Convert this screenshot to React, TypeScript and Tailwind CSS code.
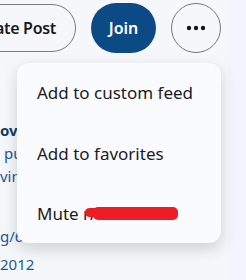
import React from "react";

export default function App() {
  return (
    <div
      className="relative w-[246px] h-[280px] overflow-hidden bg-[#f6f7fb]"
      style={{ fontFamily: '"Noto Sans", "Open Sans", sans-serif' }}
    >
      {/* right strip */}
      <div className="absolute top-0 right-0 w-[18px] h-full bg-[#f3f5fc]" />

      {/* background text */}
      <div className="absolute left-0 top-[119px] flex flex-col text-[15px] leading-[23px] text-[#1b5a97]">
        <span className="font-bold text-[#0f3d6b]">ove</span>
        <span className="pl-[4px]">pu</span>
        <span>vin</span>
        <span className="h-[37px]" />
        <span>g/6</span>
        <span className="mt-[5px]">2012</span>
      </div>

      {/* top buttons row */}
      <div className="absolute top-[3px] right-[25px] flex items-center gap-[15px] whitespace-nowrap">
        <div className="h-[48px] px-[19px] rounded-full border border-[#7c7c7c] flex items-center justify-center text-[16px] font-semibold tracking-[-0.3px] text-[#1a1a1b]">
          Create Post
        </div>
        <div className="h-[50px] w-[65px] rounded-full bg-[#0b4a85] flex items-center justify-center text-[16px] font-semibold text-white">
          Join
        </div>
        <div className="h-[50px] w-[50px] rounded-full border border-[#777] flex items-center justify-center">
          <svg width="20" height="6" viewBox="0 0 20 6">
            <circle cx="3" cy="3" r="2.2" fill="#0f1a1c" />
            <circle cx="10" cy="3" r="2.2" fill="#0f1a1c" />
            <circle cx="17" cy="3" r="2.2" fill="#0f1a1c" />
          </svg>
        </div>
      </div>

      {/* dropdown menu */}
      <div className="absolute left-[17px] top-[63px] w-[204px] h-[180px] rounded-[12px] bg-[#fafbff] shadow-[0_6px_16px_rgba(0,0,0,0.16)] flex flex-col">
        <div className="h-[60px] flex items-center pl-[20px] text-[17px] text-[#1c1c1e]">
          Add to custom feed
        </div>
        <div className="h-[62px] flex items-center pl-[20px] text-[17px] text-[#1c1c1e]">
          Add to favorites
        </div>
        <div className="relative h-[58px] flex items-center pl-[20px] text-[17px] text-[#1c1c1e]">
          <span>Mute r/</span>
          <div className="absolute left-[68px] top-[23px] w-[12px] h-[9px] rounded-l-full bg-[#ee1c25]" />
          <div className="absolute left-[76px] top-[22px] w-[85px] h-[13px] rounded-[5px] bg-[#ee1c25]" />
        </div>
      </div>
    </div>
  );
}
